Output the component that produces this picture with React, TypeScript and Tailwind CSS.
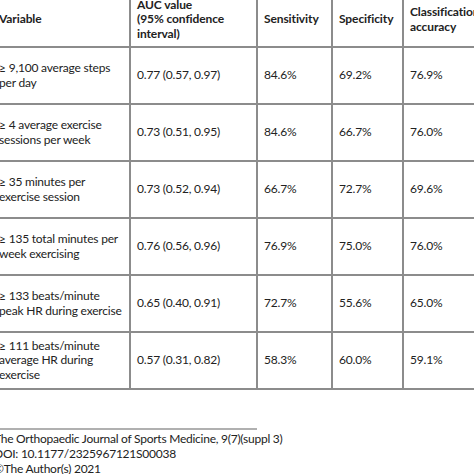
const rows = [
  [["≥ 9,100 average steps", "per day"], "0.77 (0.57, 0.97)", "84.6%", "69.2%", "76.9%"],
  [["≥ 4 average exercise", "sessions per week"], "0.73 (0.51, 0.95)", "84.6%", "66.7%", "76.0%"],
  [["≥ 35 minutes per", "exercise session"], "0.73 (0.52, 0.94)", "66.7%", "72.7%", "69.6%"],
  [["≥ 135 total minutes per", "week exercising"], "0.76 (0.56, 0.96)", "76.9%", "75.0%", "76.0%"],
  [["≥ 133 beats/minute", "peak HR during exercise"], "0.65 (0.40, 0.91)", "72.7%", "55.6%", "65.0%"],
  [["≥ 111 beats/minute", "average HR during", "exercise"], "0.57 (0.31, 0.82)", "58.3%", "60.0%", "59.1%"],
];

const headers = [
  ["Variable"],
  ["AUC value", "(95% confidence", "interval)"],
  ["Sensitivity"],
  ["Specificity"],
  ["Classification", "accuracy"],
];

const cell = "flex flex-col justify-center whitespace-nowrap border-r-2 border-b-2 border-[#8c8c8c] pl-[6px]";

function Lines({ v }: { v: string | string[] }) {
  const list = Array.isArray(v) ? v : [v];
  return (
    <>
      {list.map((l) => (
        <span key={l}>{l}</span>
      ))}
    </>
  );
}

export default function App() {
  return (
    <div
      className="w-[474px] h-[474px] overflow-hidden bg-white text-[#222] text-[12px] leading-[14.5px]"
      style={{ fontFamily: "Lato, 'Open Sans', sans-serif" }}
    >
      <div className="ml-[-7px] mt-[-7px] grid grid-cols-[138px_127px_75px_71px_90px] w-[501px]">
        {headers.map((h, i) => (
          <div key={i} className={`${cell} h-[55px] font-bold tracking-[-0.1px]`}>
            <Lines v={h} />
          </div>
        ))}
        {rows.map((r, ri) =>
          r.map((c, ci) => (
            <div key={ri + "-" + ci} className={`${cell} h-[57px] tracking-[-0.2px]`}>
              <Lines v={c} />
            </div>
          ))
        )}
      </div>

      <div className="ml-[-6px] mt-[38px]">
        <div className="w-[263px] border-t-2 border-[#b0b0b0]" />
        <div className="pt-[1px] leading-[15px] tracking-[-0.25px]">
          <div>The Orthopaedic Journal of Sports Medicine, 9(7)(suppl 3)</div>
          <div>DOI: 10.1177/2325967121S00038</div>
          <div>©The Author(s) 2021</div>
        </div>
      </div>
    </div>
  );
}
